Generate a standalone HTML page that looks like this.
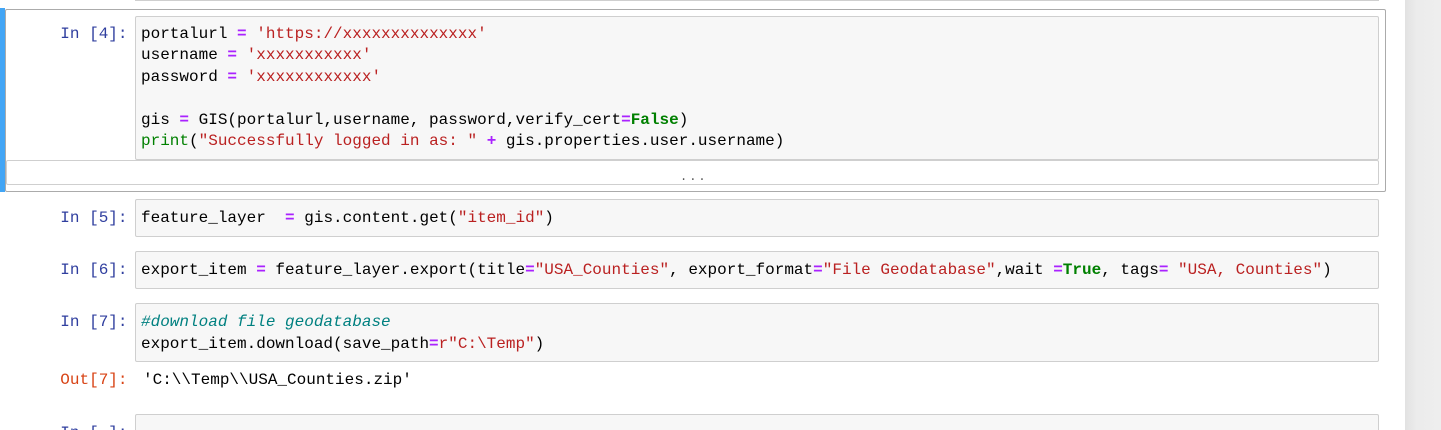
<!DOCTYPE html>
<html><head><meta charset="utf-8"><style>
html,body{margin:0;padding:0;width:1441px;height:430px;overflow:hidden;background:#fff}
#w{position:relative;width:1441px;height:430px;overflow:hidden;background:#fff}
#w div{position:absolute;box-sizing:border-box}
.box{left:135px;width:1244px;background:#f7f7f7;border:1px solid #cfcfcf;border-radius:2px}
.l{font:16px/21.4px "Liberation Mono",monospace;white-space:pre;color:#000;left:141px;letter-spacing:0}
.p{font:16px/21.4px "Liberation Mono",monospace;white-space:pre;color:#303f9f;width:127.5px;left:0;text-align:right}
.o{color:#d84315}
b.k{color:#a2f;font-weight:bold}
i.s{color:#ba2121;font-style:normal}
i.g{color:#008000;font-style:normal}
b.t{color:#008000}
i.c{color:#008080;font-style:italic}
</style></head><body>
<div id="w">
<div style="left:1405px;top:0;width:36px;height:430px;background:linear-gradient(90deg,#e2e2e2,#ececec 12px,#eee)"></div>
<div style="left:135px;top:0;width:1244px;height:1px;background:#cfcfcf"></div>

<div style="left:5px;top:9px;width:1381px;height:183px;border:1px solid #ababab;border-radius:2px"></div>
<div style="left:0;top:8px;width:5px;height:184px;background:#42a5f5"></div>
<div class="box" style="top:16px;height:144px"></div>
<div style="left:6px;top:160px;width:1373px;height:25px;border:1px solid #cfcfcf;border-radius:2px;background:#fff"></div>
<div style="left:680px;top:169px;font:12px/16px 'Liberation Mono',monospace;color:#555;letter-spacing:2px;white-space:pre">...</div>

<div class="p" style="top:24px">In [4]:</div>
<div class="l" style="top:24px">portalurl <b class="k">=</b> <i class="s">'https://xxxxxxxxxxxxxx'</i></div>
<div class="l" style="top:45px">username <b class="k">=</b> <i class="s">'xxxxxxxxxxx'</i></div>
<div class="l" style="top:67px">password <b class="k">=</b> <i class="s">'xxxxxxxxxxxx'</i></div>
<div class="l" style="top:109.5px">gis <b class="k">=</b> GIS(portalurl,username, password,verify_cert<b class="k">=</b><b class="t">False</b>)</div>
<div class="l" style="top:131px"><i class="g">print</i>(<i class="s">"Successfully logged in as: "</i> <b class="k">+</b> gis.properties.user.username)</div>

<div class="box" style="top:199px;height:38px"></div>
<div class="p" style="top:208px">In [5]:</div>
<div class="l" style="top:208px">feature_layer  <b class="k">=</b> gis.content.get(<i class="s">"item_id"</i>)</div>

<div class="box" style="top:251px;height:38px"></div>
<div class="p" style="top:260px">In [6]:</div>
<div class="l" style="top:260px">export_item <b class="k">=</b> feature_layer.export(title<b class="k">=</b><i class="s">"USA_Counties"</i>, export_format<b class="k">=</b><i class="s">"File Geodatabase"</i>,wait <b class="k">=</b><b class="t">True</b>, tags<b class="k">=</b> <i class="s">"USA, Counties"</i>)</div>

<div class="box" style="top:303px;height:59px"></div>
<div class="p" style="top:312px">In [7]:</div>
<div class="l" style="top:312px"><i class="c">#download file geodatabase</i></div>
<div class="l" style="top:333.5px">export_item.download(save_path<b class="k">=</b><i class="s">r"C:\Temp"</i>)</div>

<div class="p o" style="top:370px">Out[7]:</div>
<div class="l" style="top:370px;left:143px">'C:\\Temp\\USA_Counties.zip'</div>

<div class="box" style="top:414px;height:16px;border-bottom:0;border-radius:2px 2px 0 0"></div>
<div style="left:0;top:423px;width:130px;height:7px;overflow:hidden"><div class="p" style="top:0">In [ ]:</div></div>
</div>
</body></html>
